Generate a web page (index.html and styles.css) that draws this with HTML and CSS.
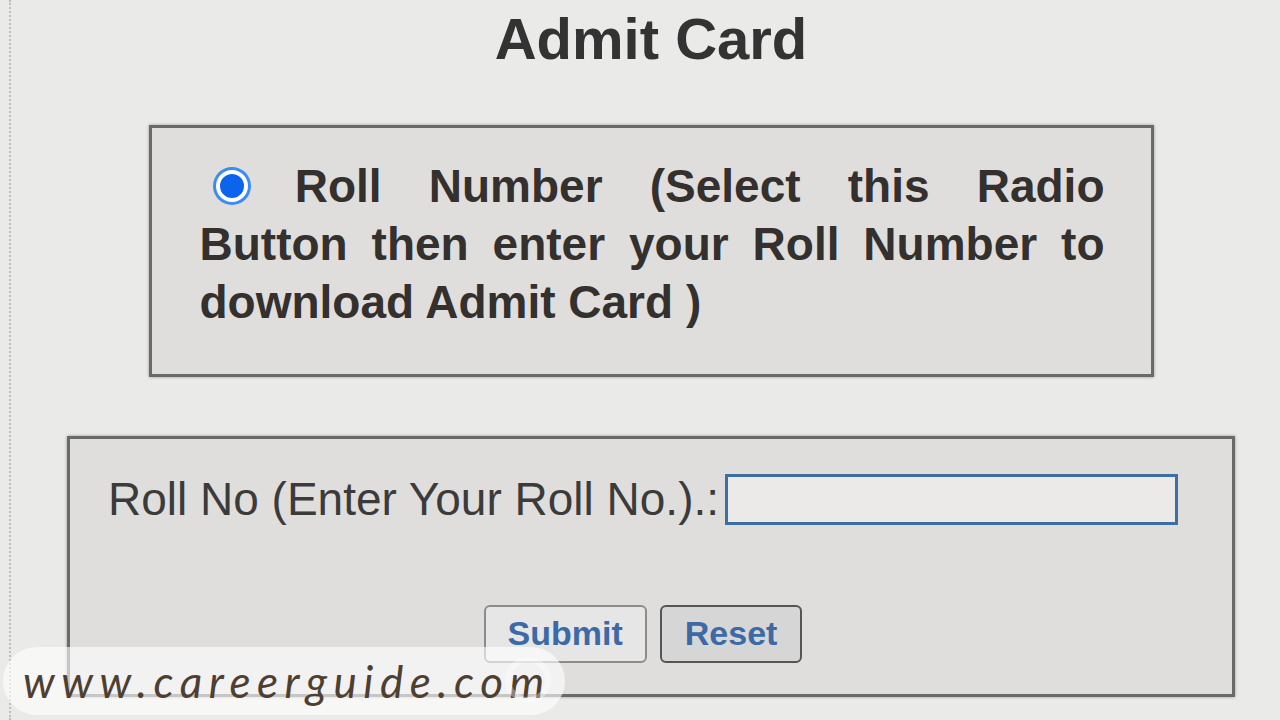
FILE: index.html
```
<!DOCTYPE html>
<html lang="en">
<head>
    <meta charset="UTF-8">
    <meta name="viewport" content="width=device-width, initial-scale=1.0">
    <title>Admit Card</title>
    <link rel="stylesheet" href="styles.css">
</head>
<body>
    <div class="page">
        <div class="content">
            <h1 class="title">Admit Card</h1>

            <!-- Search type -->
            <div class="box choice">
                <label class="line justify"><span class="radio"></span> Roll Number (Select this Radio</label>
                <span class="line justify">Button then enter your Roll Number to</span>
                <span class="line">download Admit Card )</span>
            </div>

            <!-- Roll number form -->
            <form class="box form" onsubmit="return false;">
                <div class="field">
                    <label for="rollno">Roll No (Enter Your Roll No.).:</label>
                    <input type="text" id="rollno">
                </div>
                <div class="actions">
                    <button type="submit" class="btn">Submit</button>
                    <button type="reset" class="btn btn-reset">Reset</button>
                </div>
            </form>
        </div>
    </div>

    <div class="watermark">
        <span class="watermark-text">www.careerguide.com</span>
        <span class="watermark-logo"></span>
    </div>
</body>
</html>
```

FILE: styles.css
```
:root {
    --page-bg: #eaeae8;
    --box-bg: #dfdedd;
    --box-border: #6a6a6a;
    --text-dark: #33302e;
    --btn-text: #3c6aa6;
}

* {
    margin: 0;
    padding: 0;
    box-sizing: border-box;
    font-family: 'Liberation Sans', Arial, sans-serif;
}

html, body {
    height: 100%;
}

body {
    background: var(--page-bg);
    overflow: hidden;
}

.page {
    margin-left: 9px;
    border-left: 2px dotted #bdbdbd;
    min-height: 720px;
}

.content {
    width: 1280px;
    display: flex;
    flex-direction: column;
    align-items: center;
}

.title {
    margin-top: 6px;
    font-size: 58px;
    font-weight: bold;
    color: #333;
    line-height: 1.15;
}

.box {
    background: var(--box-bg);
    border: 3px solid var(--box-border);
    box-shadow: 0 0 3px rgba(0, 0, 0, 0.35);
}

.choice {
    margin-top: 52px;
    width: 1005px;
    padding: 29px 46px 43px 48px;
    font-size: 46px;
    font-weight: bold;
    line-height: 58px;
    color: var(--text-dark);
}

.line {
    display: block;
}

.justify {
    text-align: justify;
    text-align-last: justify;
}

.radio {
    display: inline-block;
    width: 32px;
    height: 32px;
    margin-left: 16px;
    border-radius: 50%;
    background: #0b63ee;
    border: 4px solid #fff;
    box-shadow: 0 0 0 3px #3d8bf6;
    vertical-align: 0;
}

.form {
    margin-top: 59px;
    width: 1168px;
    padding: 34px 0 31px 38px;
}

.field {
    display: flex;
    align-items: center;
    font-size: 46px;
    color: #3b3b3b;
}

.field label {
    line-height: 1.15;
}

#rollno {
    width: 453px;
    height: 51px;
    margin-left: 6px;
    background: #ebeae8;
    border: 3px solid #3e6ea6;
    font-size: 30px;
}

.actions {
    display: flex;
    justify-content: center;
    gap: 13px;
    margin-top: 79px;
    padding-right: 54px;
}

.btn {
    height: 58px;
    padding: 0 22px;
    font-size: 34px;
    font-weight: bold;
    color: var(--btn-text);
    background: #e6e6e6;
    border: 2px solid #8c8c8c;
    border-radius: 6px;
    cursor: pointer;
}

.btn-reset {
    background: #d6d6d6;
    border-color: #555;
    padding: 0 23px;
}

.watermark {
    position: absolute;
    left: 3px;
    top: 647px;
    width: 562px;
    height: 68px;
    border-radius: 34px;
    background: rgba(255, 255, 255, 0.62);
    display: flex;
    align-items: center;
    padding-left: 20px;
}

.watermark-text {
    font-family: Lato, 'Open Sans', sans-serif;
    font-style: italic;
    font-size: 44px;
    letter-spacing: 6.5px;
    color: #4d4030;
}

.watermark-logo {
    position: absolute;
    right: 14px;
    top: 10px;
    width: 46px;
    height: 46px;
    border-radius: 50%;
    border: 6px solid rgba(255, 255, 255, 0.35);
}
```
